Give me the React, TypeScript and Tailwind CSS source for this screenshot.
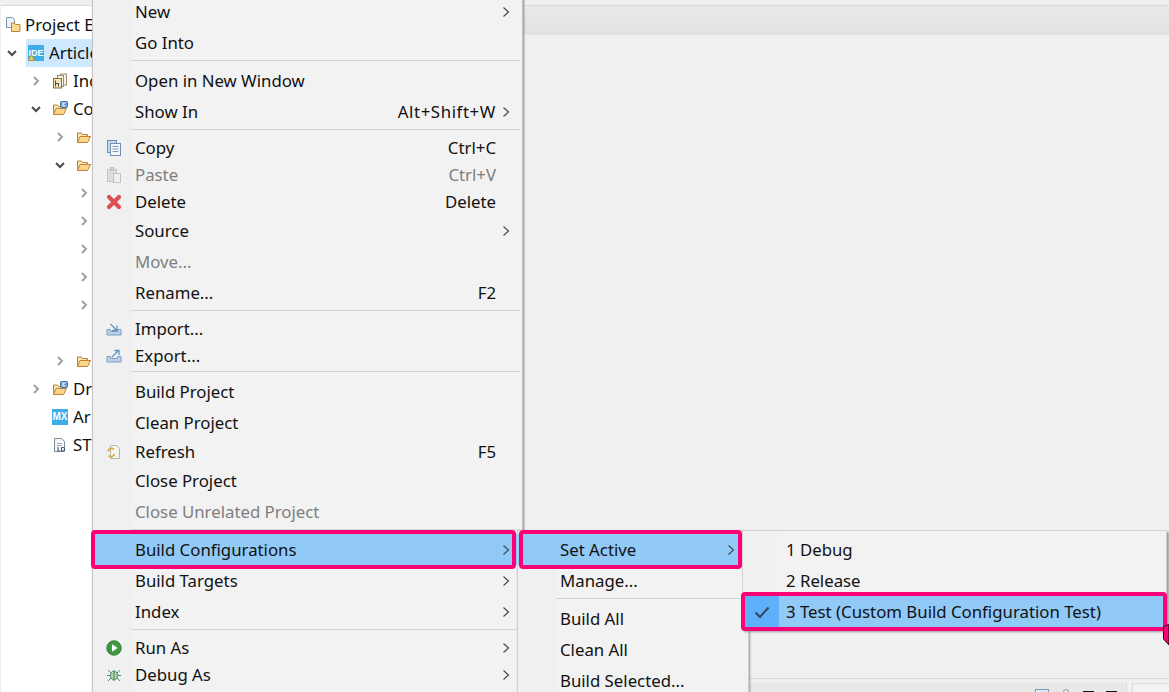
type Item = {
  label?: string;
  tall?: boolean;
  sep?: boolean;
  key2?: string;
  keyClass?: string;
  arrow?: boolean;
  off?: boolean;
  icon?: React.ReactNode;
  box?: string;
};

function Chevron({ down, dark }: { down?: boolean; dark?: boolean }) {
  return (
    <svg width="12" height="12" viewBox="0 0 12 12" fill="none" stroke={dark ? "#4a4a4a" : "#a0a0a0"} strokeWidth="2">
      {down ? <path d="M2 4l4 4 4-4" /> : <path d="M4 2l4 4-4 4" />}
    </svg>
  );
}

function Folder({ badge }: { badge?: boolean }) {
  return (
    <svg className="shrink-0" width="16" height="16" viewBox="0 0 16 16">
      <path d="M1.500 13.500V4h4l1 1.500h5V8" fill="#fbe3ad" stroke="#b9853c" />
      <path d="M1.500 13.500L4 7.500h10.500l-3 6z" fill="#fdd68c" stroke="#b9853c" />
      {badge && <rect x="8.500" y="0.500" width="7" height="6" rx="1" fill="#6f9fd0" stroke="#4a76a8" />}
      {badge && <path d="M13.500 2H11v3h2.500" fill="none" stroke="#fff" />}
    </svg>
  );
}

function CopyIcon({ off }: { off?: boolean }) {
  const s = off ? "#c4c4c4" : "#6e8fb0";
  return (
    <svg width="16" height="16" viewBox="0 0 16 16" fill="#f4f6f8" stroke={s}>
      {off ? (
        <>
          <rect x="1.500" y="2.500" width="9" height="12" fill="#dcdcdc" />
          <rect x="4.500" y="0.500" width="3" height="3" fill="#cfcfcf" />
          <rect x="7.500" y="6.500" width="7" height="9" fill="#f0f0f0" />
        </>
      ) : (
        <>
          <rect x="1.500" y="0.500" width="9" height="12" fill="#c9d8e8" />
          <rect x="4.500" y="3.500" width="10" height="12" />
          <path d="M6.500 6.500h6M6.500 9h6M6.500 11.500h6" stroke="#7f9ab8" />
        </>
      )}
    </svg>
  );
}

function DeleteIcon() {
  return (
    <svg width="16" height="16" viewBox="0 0 16 16">
      <path d="M3 3l10 10M13 3L3 13" stroke="#de4f52" strokeWidth="4.200" strokeLinecap="round" />
    </svg>
  );
}

function TrayIcon({ out }: { out?: boolean }) {
  return (
    <svg width="16" height="16" viewBox="0 0 16 16" fill="none">
      <path d="M1 8.500v5.500h14V8.500h-3.500v2h-7v-2z" fill="#bcd0e6" stroke="#7c9dc2" />
      {out ? (
        <path d="M6 9l6-6M8.500 2.500H13V7" stroke="#5f93c9" strokeWidth="1.300" />
      ) : (
        <path d="M4.500 3l6 6M11 4.500V9.500H6" stroke="#5f93c9" strokeWidth="1.300" />
      )}
    </svg>
  );
}

function RefreshIcon() {
  return (
    <svg width="16" height="16" viewBox="0 0 16 16" fill="none">
      <path d="M4.500 1.500h6l3 3v10h-9z" fill="#f6f6f0" stroke="#b5b5a8" />
      <path d="M2 7.500a3.500 3.500 0 0 1 6-2M8.500 10a3.500 3.500 0 0 1-6 1.500" stroke="#d9a93e" strokeWidth="1.700" />
    </svg>
  );
}

function RunIcon() {
  return (
    <svg width="16" height="16" viewBox="0 0 16 16">
      <circle cx="8" cy="8" r="7.200" fill="#3f9a3f" stroke="#2a7d38" />
      <path d="M6 4.200l5.600 3.800L6 11.800z" fill="#fff" />
    </svg>
  );
}

function BugIcon() {
  return (
    <svg width="16" height="16" viewBox="0 0 16 16" fill="none" stroke="#4f8a68">
      <path d="M2 3l3 3M14 3l-3 3M1 8.500h3M15 8.500h-3M2 14l3-3M14 14l-3-3" />
      <ellipse cx="8" cy="8.500" rx="3.600" ry="4.600" fill="#a9d3a4" />
      <path d="M8 4v9" />
    </svg>
  );
}

const mainMenu: Item[] = [
  { label: "New", arrow: true },
  { label: "Go Into" },
  { sep: true },
  { label: "Open in New Window" },
  { label: "Show In", key2: "Alt+Shift+W", keyClass: "tracking-[0.6px]", arrow: true },
  { sep: true },
  { label: "Copy", tall: true, key2: "Ctrl+C", icon: <CopyIcon /> },
  { label: "Paste", tall: true, key2: "Ctrl+V", off: true, icon: <CopyIcon off /> },
  { label: "Delete", tall: true, key2: "Delete", icon: <DeleteIcon /> },
  { label: "Source", arrow: true },
  { label: "Move...", off: true },
  { label: "Rename...", key2: "F2" },
  { sep: true },
  { label: "Import...", tall: true, icon: <TrayIcon /> },
  { label: "Export...", tall: true, icon: <TrayIcon out /> },
  { sep: true },
  { label: "Build Project" },
  { label: "Clean Project" },
  { label: "Refresh", tall: true, key2: "F5", icon: <RefreshIcon /> },
  { label: "Close Project" },
  { label: "Close Unrelated Project", off: true },
  { sep: true },
  { label: "Build Configurations", arrow: true, box: "-left-[2px] right-[4px]" },
  { label: "Build Targets", arrow: true },
  { label: "Index", arrow: true },
  { sep: true },
  { label: "Run As", tall: true, arrow: true, icon: <RunIcon /> },
  { label: "Debug As", tall: true, arrow: true, icon: <BugIcon /> },
];

const subMenu: Item[] = [
  { label: "Set Active", arrow: true, box: "left-px right-[3px]" },
  { label: "Manage..." },
  { sep: true },
  { label: "Build All" },
  { label: "Clean All" },
  { label: "Build Selected..." },
];

function MenuArrow() {
  return (
    <svg width="8" height="12" viewBox="0 0 8 12" fill="none" stroke="#444" strokeWidth="1.100">
      <path d="M1.500 1.500L6.500 6l-5 4.500" />
    </svg>
  );
}

function Row({ item }: { item: Item }) {
  if (item.sep) {
    return (
      <div className="h-[7px] pt-[2px] pl-[38px]">
        <div className="h-px w-full bg-[#d4d4d4]" />
      </div>
    );
  }
  const tone = item.off ? "text-[#7e7e7e]" : "text-[#111]";
  return (
    <div className={`relative flex items-center ${item.tall ? "h-[27px]" : "h-[31px]"} ${item.box ? "bg-[#91c9f7]" : ""}`}>
      <div className="flex w-[42px] shrink-0 justify-center items-center">{item.icon}</div>
      <div className={`flex-1 ${tone}`}>{item.label}</div>
      {item.key2 && <div className={`${tone} ${item.keyClass ?? ""}`}>{item.key2}</div>}
      <div className="w-[24px] shrink-0 flex pl-[6px]">{item.arrow && <MenuArrow />}</div>
      {item.box && <div className={`absolute -inset-y-[4px] border-4 border-[#fb0077] rounded-[4px] ${item.box}`} />}
    </div>
  );
}

const treeRows: { indent: number; arrow?: "down" | "right"; dark?: boolean; icon?: React.ReactNode; text?: string; selected?: boolean }[] = [
  {
    indent: 6,
    arrow: "down",
    dark: true,
    selected: true,
    text: "Article",
    icon: (
      <div className="relative shrink-0 w-4 h-4 bg-[#3eaee6] text-white text-[9px] font-bold leading-4 text-center font-['Liberation_Sans',sans-serif]">
        IDE
        <svg className="absolute left-0 bottom-0" width="7" height="7" viewBox="0 0 7 7">
          <path d="M3.500 0.500L6.800 6.600H0.200z" fill="#f2c94c" stroke="#a67c1a" strokeWidth="0.600" />
        </svg>
      </div>
    ),
  },
  {
    indent: 30,
    arrow: "right",
    text: "Inc",
    icon: (
      <svg className="shrink-0" width="16" height="16" viewBox="0 0 16 16" fill="#f4f1e6" stroke="#9a8f70">
        <rect x="8.500" y="1" width="6" height="11" />
        <rect x="5.500" y="2.500" width="6" height="11" />
        <rect x="1.500" y="5.500" width="8" height="9.500" fill="#f6e2b5" stroke="#8a6d3b" />
        <path d="M3.500 7.500v6M3.500 10.500h3v3" stroke="#34507a" fill="none" />
      </svg>
    ),
  },
  { indent: 30, arrow: "down", dark: true, text: "Co", icon: <Folder badge /> },
  { indent: 54, arrow: "right", icon: <Folder /> },
  { indent: 54, arrow: "down", dark: true, icon: <Folder /> },
  { indent: 78, arrow: "right" },
  { indent: 78, arrow: "right" },
  { indent: 78, arrow: "right" },
  { indent: 78, arrow: "right" },
  { indent: 78, arrow: "right" },
  { indent: 78 },
  { indent: 54, arrow: "right", icon: <Folder /> },
  { indent: 30, arrow: "right", text: "Dr", icon: <Folder badge /> },
  {
    indent: 30,
    text: "Ar",
    icon: (
      <div className="shrink-0 w-4 h-4 bg-[#3eaee6] text-white text-[10px] font-bold leading-4 text-center font-['Liberation_Sans',sans-serif]">MX</div>
    ),
  },
  {
    indent: 30,
    text: "ST",
    icon: (
      <svg className="shrink-0" width="16" height="16" viewBox="0 0 16 16" fill="#f6f6f6" stroke="#7f8a99">
        <path d="M2.500 1.500h7l3 3v10h-10z" />
        <path d="M5 6.500h5M5 8.500h5" stroke="#9fb2c8" />
        <path d="M6 10v4h2M9.500 10.500v3.500h1.500a1.500 1.500 0 0 0 0-3.500z" stroke="#34507a" fill="none" />
      </svg>
    ),
  },
];

const menuBg = "bg-[linear-gradient(90deg,#f0f0f0_38px,#f2f2f2_38px)]";

export default function App() {
  return (
    <div className="relative flex w-[1169px] h-[692px] overflow-hidden bg-[#f0f0f0] font-['Noto_Sans','Open_Sans',sans-serif] text-[16.8px] text-[#111]">
      <div className="w-[92px] shrink-0 pl-px pt-[5px]">
        <div className="h-full bg-white border-t border-[#d9d9d9] overflow-hidden">
          <div className="flex items-center h-[33px] pt-1 pl-1 gap-[4px]">
            <svg className="shrink-0" width="16" height="16" viewBox="0 0 16 16">
              <path d="M1.500 0.500h6l2 2v8h-8z" fill="#eef2f6" stroke="#7f93aa" />
              <path d="M6.500 8V6h3l1 1.500h4.500v7h-8.500z" fill="#fbd98f" stroke="#b9853c" />
            </svg>
            <span className="whitespace-nowrap">Project E</span>
          </div>
          {treeRows.map((row, i) => (
            <div key={i} className="relative flex items-center h-7 whitespace-nowrap" style={{ paddingLeft: row.indent - 1 }}>
              <div className="w-[12px] mr-[8px] flex justify-center shrink-0">
                {row.arrow && <Chevron down={row.arrow === "down"} dark={row.dark} />}
              </div>
              <div className={`flex items-center h-full gap-[5px] pl-[2px] pr-4 ${row.selected ? "bg-[#cde8ff]" : ""}`}>
                {row.icon}
                {row.text && <span>{row.text}</span>}
              </div>
            </div>
          ))}
        </div>
      </div>

      <div className="flex-1 flex flex-col pt-[5px]">
        <div className="h-[30px] border-t border-[#d9d9d9] bg-gradient-to-b from-[#e9e9e9] to-[#e2e2e2]" />
        <div className="flex-1" />
        <div className="h-[14px] border-t border-[#d9d9d9] pt-[4px] flex">
          <div className="w-[1035px] shrink-0 bg-[#e8e8e8] border-r border-[#d9d9d9] flex items-start justify-end pt-[6px] pr-[9px]">
            <div className="w-[14px] h-3 border border-[#7f9ab8] bg-[#dcecf8] mr-[14px]" />
            <div className="w-[6px] h-3 border border-[#999] rounded-t mr-[14px]" />
            <div className="w-[11px] h-[2px] mt-[2px] bg-[#111] mr-[12px]" />
            <div className="w-[11px] h-[2px] mt-[2px] bg-[#111]" />
          </div>
          <div className="flex-1 ml-[5px] border-t border-l border-[#d9d9d9] bg-[#f3f3f3]" />
        </div>
      </div>

      {/* main context menu */}
      <div className={`absolute left-[92px] -top-[4px] w-[431px] h-[700px] ${menuBg} border-x border-[#c4c4c4] shadow-[1px_0_2px_#888] pr-[2px]`}>
        {mainMenu.map((item, i) => (
          <Row key={i} item={item} />
        ))}
      </div>

      {/* submenu */}
      <div className={`absolute left-[517px] top-[530px] w-[232px] h-[170px] ${menuBg} border-x border-t border-[#cfcfcf] shadow-[1px_1px_2px_#999] pt-[3px] pr-[3px]`}>
        {subMenu.map((item, i) => (
          <Row key={i} item={item} />
        ))}
      </div>

      {/* third level */}
      <div className="absolute left-[742px] top-[530px] w-[425px] h-[100px] bg-[linear-gradient(90deg,#f0f0f0_34px,#f2f2f2_34px)] border-t border-r border-l border-[#d2d2d2] shadow-[2px_2px_2px_#9a9a9a]">
        <div className="flex items-center h-[34px] pt-[3px] pl-[43px]">1 Debug</div>
        <div className="flex items-center h-[31px] pl-[43px]">2 Release</div>
        <div className="relative flex items-center h-[31px] bg-[#91c9f7] -mx-px">
          <div className="w-[34px] h-full ml-[3px] bg-[#5eb0fb] flex items-center justify-center">
            <svg width="16" height="14" viewBox="0 0 16 14" fill="none" stroke="#33475c" strokeWidth="2">
              <path d="M1.500 7.500l4.500 4.500 8.500-9.500" />
            </svg>
          </div>
          <span className="ml-[7px]">3 Test (Custom Build Configuration Test)</span>
          <div className="absolute -inset-y-[4px] -left-px right-0 border-4 border-[#fb0077] rounded-[4px]" />
        </div>
      </div>

      {/* pointer */}
      <svg className="absolute left-[1163px] top-[624px]" width="6" height="22" viewBox="0 0 6 22">
        <path d="M0.500 3L6 0v21L0.500 15z" fill="#fb0077" stroke="#111" />
      </svg>
    </div>
  );
}
